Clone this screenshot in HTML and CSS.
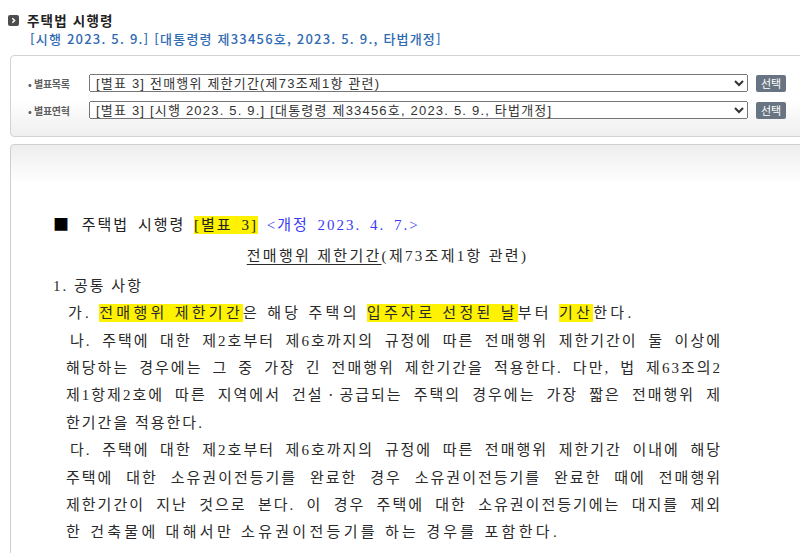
FILE: index.html
```html
<!DOCTYPE html>
<html lang="ko">
<head>
<meta charset="utf-8">
<title>주택법 시행령</title>
<link rel="stylesheet" href="styles.css">
</head>
<body>
<div class="head">
  <div class="title-row">
    <span class="title-icon"><svg width="11" height="11" viewBox="0 0 11 11"><rect width="11" height="11" rx="2" fill="#4d4d4d"/><path d="M4.3 3.2 L6.6 5.5 L4.3 7.8" fill="none" stroke="#fff" stroke-width="1.5"/></svg></span>
    <span class="title">주택법 시행령</span>
  </div>
  <div class="subtitle">[시행 2023. 5. 9.] [대통령령 제33456호, 2023. 5. 9., 타법개정]</div>
</div>

<div class="panel">
  <div class="row">
    <span class="label">• 별표목록</span>
    <select class="sel"><option>[별표 3] 전매행위 제한기간(제73조제1항 관련)</option></select>
    <button class="btn">선택</button>
  </div>
  <div class="row">
    <span class="label">• 별표연혁</span>
    <select class="sel"><option>[별표 3] [시행 2023. 5. 9.] [대통령령 제33456호, 2023. 5. 9., 타법개정]</option></select>
    <button class="btn">선택</button>
  </div>
</div>

<div class="content">
  <div class="doc">
    <div class="doc-head"><span class="sq">■</span> 주택법 시행령 <span class="hl">[별표 3]</span> <span class="rev">&lt;개정 2023. 4. 7.&gt;</span></div>
    <div class="doc-title"><span class="ul">전매행위 제한기간</span>(제73조제1항 관련)</div>
    <div class="sec">1. 공통 사항</div>
    <div class="item">
      <span class="ln first end wide">가. <span class="hl">전매행위 제한기간</span>은 해당 주택의 <span class="hl">입주자로 선정된 날</span>부터 <span class="hl">기산</span>한다.</span>
    </div>
    <div class="item">
      <span class="ln ind">나. 주택에 대한 제2호부터 제6호까지의 규정에 따른 전매행위 제한기간이 둘 이상에</span>
      <span class="ln">해당하는 경우에는 그 중 가장 긴 전매행위 제한기간을 적용한다. 다만, 법 제63조의2</span>
      <span class="ln">제1항제2호에 따른 지역에서 건설ㆍ공급되는 주택의 경우에는 가장 짧은 전매행위 제</span>
      <span class="ln end">한기간을 적용한다.</span>
    </div>
    <div class="item">
      <span class="ln ind">다. 주택에 대한 제2호부터 제6호까지의 규정에 따른 전매행위 제한기간 이내에 해당</span>
      <span class="ln">주택에 대한 소유권이전등기를 완료한 경우 소유권이전등기를 완료한 때에 전매행위</span>
      <span class="ln">제한기간이 지난 것으로 본다. 이 경우 주택에 대한 소유권이전등기에는 대지를 제외</span>
      <span class="ln end wide">한 건축물에 대해서만 소유권이전등기를 하는 경우를 포함한다.</span>
    </div>
  </div>
</div>
</body>
</html>
```

FILE: styles.css
```css
html, body {
  margin: 0;
  padding: 0;
  background: #fff;
  overflow: hidden;
}
body {
  font-family: "Noto Sans CJK KR", "Noto Sans", sans-serif;
  color: #333;
}
.head {
  padding: 9px 0 0 8px;
}
.title-row {
  display: flex;
  align-items: center;
  gap: 8px;
  height: 22px;
}
.title-icon {
  display: flex;
  width: 11px;
  height: 11px;
}
.title {
  font-size: 13.5px;
  font-weight: 700;
  color: #222;
  letter-spacing: 1.2px;
}
.subtitle {
  margin-left: 22px;
  font-size: 13px;
  line-height: 15px;
  color: #2f6ab3;
  font-weight: 500;
  letter-spacing: 1.2px;
}
.panel {
  margin: 9px -10px 0 10px;
  height: 82px;
  border: 1px solid #d3d3d3;
  border-radius: 4px;
  background: linear-gradient(#fff 0%, #fff 55%, #efefef 100%);
  padding: 18px 0 0 17px;
  box-sizing: border-box;
  display: flex;
  flex-direction: column;
  gap: 9px;
}
.row {
  display: flex;
  align-items: center;
  height: 18px;
}
.label {
  width: 61px;
  font-size: 10px;
  font-weight: 700;
  color: #5e5e5e;
  white-space: nowrap;
  letter-spacing: -0.3px;
}
.sel {
  width: 659px;
  height: 18px;
  box-sizing: border-box;
  font-family: "Liberation Sans", "Noto Sans CJK KR", sans-serif;
  font-size: 13px;
  color: #333;
  padding: 0 2px;
  letter-spacing: 1.2px;
}
.btn {
  margin-left: 8px;
  width: 30px;
  height: 17px;
  padding: 0;
  border: 0;
  border-radius: 2px;
  background: #687482;
  color: #fff;
  font-family: "Noto Sans CJK KR", sans-serif;
  font-size: 11px;
  line-height: 17px;
}
.content {
  margin: 7px -10px 0 10px;
  height: 420px;
  border: 1px solid #cfcfcf;
  border-radius: 4px 4px 0 0;
  background: linear-gradient(#ededed 0px, #fff 38px);
}
.doc {
  width: 669px;
  padding: 63px 0 0 42px;
  font-family: "Liberation Serif", "Noto Sans CJK KR", serif;
  font-size: 15px;
  line-height: 27.4px;
  color: #2a2a2a;
  letter-spacing: 2px;
}
.doc-head {
  color: #222;
  word-spacing: 3px;
  padding-top: 2px;
}
.sq {
  font-family: "Noto Sans CJK KR", sans-serif;
  font-size: 16px;
  color: #000;
  letter-spacing: 0;
  margin-right: 4px;
}
.hl {
  background: #fff200;
  padding: 1px 0;
}
.rev {
  color: #3b3bf5;
}
.doc-title {
  text-align: center;
  margin-top: 4px;
  letter-spacing: 2.3px;
}
.ul {
  text-decoration: underline;
  text-underline-offset: 3px;
}
.sec {
  margin-top: 2px;
}
.item {
  padding-left: 13px;
}
.ln {
  display: block;
  text-align: justify;
  text-align-last: justify;
  white-space: nowrap;
}
.ln.end {
  text-align: left;
  text-align-last: left;
}
.ln.wide {
  letter-spacing: 3.3px;
}
.ln.first {
  padding-left: 2px;
}
.ln.ind {
  padding-left: 4px;
}
```
